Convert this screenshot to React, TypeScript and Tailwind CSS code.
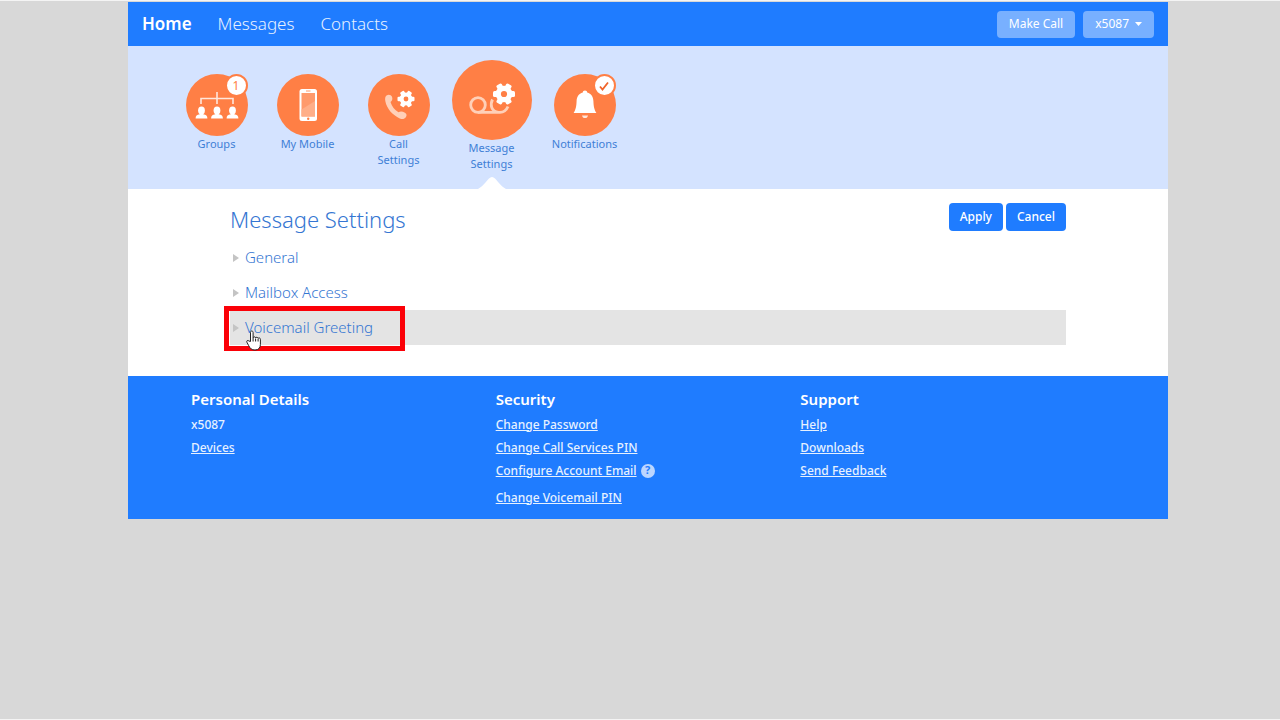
import * as React from "react";

import clsx from "clsx";

type FooterLink = { label: string; hint?: boolean };

const NAV_LINKS = ["Home", "Messages", "Contacts"];
const SECTIONS = ["General", "Mailbox Access", "Voicemail Greeting"];

const SECURITY_LINKS: FooterLink[] = [
  { label: "Change Password" },
  { label: "Change Call Services PIN" },
  { label: "Configure Account Email", hint: true },
  { label: "Change Voicemail PIN" },
];

const SUPPORT_LINKS: FooterLink[] = [{ label: "Help" }, { label: "Downloads" }, { label: "Send Feedback" }];

function Gear({ x, y, r }: { x: number; y: number; r: number }): React.JSX.Element {
  return (
    <g transform={`translate(${x} ${y}) scale(${r / 11})`}>
      {[30, 90, 150].map((angle) => (
        <rect key={angle} x="-3" y="-11" width="6" height="22" rx="1.5" fill="#fff" transform={`rotate(${angle})`} />
      ))}
      <circle r="5.6" fill="none" stroke="#fff" strokeWidth="5.500" />
      <circle r="3.1" fill="#ff7f45" />
    </g>
  );
}

function Person({ x }: { x: number }): React.JSX.Element {
  return (
    <g transform={`translate(${x} 0)`} fill="#fff">
      <ellipse cx="0" cy="36.5" rx="3.4" ry="4" />
      <path d="M-1.7 38.5h3.4v1.7c3 .5 4.200 1.500 4.200 4.300H-5.900c0-2.800 1.200-3.800 4.200-4.300z" />
    </g>
  );
}

function GroupsIcon(): React.JSX.Element {
  return (
    <svg viewBox="0 0 62 62" className="h-full w-full" aria-hidden="true">
      <path d="M31 18v12M15 30v-5.500h32V30" fill="none" stroke="#ffe6db" strokeWidth="1.600" />
      <Person x={15.5} />
      <Person x={31} />
      <Person x={46.5} />
    </svg>
  );
}

function MobileIcon(): React.JSX.Element {
  return (
    <svg viewBox="0 0 62 62" className="h-full w-full" aria-hidden="true">
      <rect x="22.5" y="15" width="17.5" height="32" rx="2.5" fill="#fff" />
      <rect x="24.5" y="19" width="13.5" height="23.5" fill="#ff9a6c" />
      <path d="M24.5 35.5 38 27v15.500H24.500z" fill="#ffae88" />
      <path d="M29 17h4.500" stroke="#ff9a6c" />
      <circle cx="31.2" cy="44.7" r="1.2" fill="#ff7f45" />
    </svg>
  );
}

function CallIcon(): React.JSX.Element {
  return (
    <svg viewBox="0 0 62 62" className="h-full w-full" aria-hidden="true">
      <path
        d="M18.500 21.500c2-1.600 4.700-.8 5.500 1.200.8 2.200.3 4-1.500 5.200 1.500 4.600 4 7.800 8 10.300 1.800-1.200 4-1 6.500.5 1.800 1.100 2 3 .8 4.500-1.300 1.900-3.600 2.200-6 1.200C24.500 41 18.800 35 17.300 27c-.4-2.300-.2-4.300 1.200-5.500z"
        fill="#ffd0b8"
      />
      <Gear x={38} y={25} r={8.5} />
    </svg>
  );
}

function VoicemailIcon(): React.JSX.Element {
  return (
    <svg viewBox="0 0 80 80" className="h-full w-full" aria-hidden="true">
      <circle cx="26" cy="45" r="7.3" fill="none" stroke="#ffd0b8" strokeWidth="2.8" />
      <path
        d="M26 52.300h22c4 0 6.500-2.300 8-5.800M40.500 39.500c-2.500 5-1.500 12 6 12.800"
        fill="none"
        stroke="#ffd0b8"
        strokeWidth="2.8"
      />
      <Gear x={52} y={34} r={11} />
    </svg>
  );
}

function BellIcon(): React.JSX.Element {
  return (
    <svg viewBox="0 0 62 62" className="h-full w-full" aria-hidden="true">
      <path
        d="M31 16.500c1.400 0 2.200.8 2.200 2 4 1 6 4.200 6.200 8.500.2 5.500.8 8.500 3 12H19.600c2.200-3.500 2.800-6.500 3-12 .2-4.300 2.200-7.500 6.200-8.500 0-1.200.8-2 2.200-2z"
        fill="#fff"
      />
      <path d="M28 41.500h6c-.3 1.700-1.400 2.600-3 2.600s-2.700-.9-3-2.600z" fill="#ffe6db" />
    </svg>
  );
}

function PointerIcon(): React.JSX.Element {
  return (
    <svg viewBox="0 0 16 21" className="h-[21px] w-4" aria-hidden="true">
      <path
        d="M4.500 11.500V2.500c0-2 2.600-2 2.600 0v5.300c.2-1.400 2.400-1.300 2.500.2.300-1.200 2.400-1 2.500.5.500-1 2.300-.7 2.300.8v5c0 3.400-1.600 5.700-5.400 5.700-3.500 0-4.800-1.600-6.300-4.300L.9 12.200c-.7-1.500 1-2.400 2-1.200z"
        fill="#fff"
        stroke="#222"
        strokeWidth="1"
      />
      <path d="M7.100 8v3.500M9.600 8.500v3M12.100 9v2.500" stroke="#222" strokeWidth="1" />
    </svg>
  );
}

type TileProps = {
  label: string;
  icon: React.ReactNode;
  badge?: React.ReactNode;
  active?: boolean;
};

function Tile({ label, icon, badge, active }: TileProps): React.JSX.Element {
  return (
    <a href="#" className={clsx("relative flex flex-col items-center", active ? "w-[95px]" : "w-[91px] pt-[14px]")}>
      <span className={clsx("relative block rounded-full bg-[#ff7f45]", active ? "size-20" : "size-[62px]")}>
        {icon}
        {badge && (
          <span className="absolute top-0 right-0 flex size-[23px] items-center justify-center rounded-full border-2 border-[#ff7f45] bg-white text-xs text-[#ff7f45]">
            {badge}
          </span>
        )}
      </span>
      <span className="text-center text-[11px] leading-4 whitespace-pre-line text-[#3f7fd6]">{label}</span>
      {active && (
        <svg viewBox="0 0 28 12" className="absolute bottom-0 h-3 w-7" aria-hidden="true">
          <path d="M0 12C4 10 8 5 11 1.500c2-2 4-2 6 0C20 5 24 10 28 12z" fill="#fff" />
        </svg>
      )}
    </a>
  );
}

function FooterLinks({ links }: { links: FooterLink[] }): React.JSX.Element {
  return (
    <ul>
      {links.map(({ label, hint }) => (
        <li key={label} className={clsx("flex h-[23px] items-center gap-1", hint && "mb-1")}>
          <a href="#" className="underline">
            {label}
          </a>
          {hint && (
            <button
              type="button"
              aria-label="About account email"
              className="flex size-[14px] items-center justify-center rounded-full bg-[#bcd6ff] text-[11px] font-bold text-[#1f7cff]"
            >
              ?
            </button>
          )}
        </li>
      ))}
    </ul>
  );
}

export default function App(): React.JSX.Element {
  return (
    <div className="min-h-screen border-y border-[#f4f4f4] bg-[#d8d8d8] pt-px pr-28 pl-32 font-['Noto_Sans',sans-serif]">
      <header className="flex h-11 items-center justify-between bg-[#1f7cff] px-[14px]">
        <nav className="flex gap-[26px] text-[17px]">
          {NAV_LINKS.map((label) => (
            <a key={label} href="#" className={label === "Home" ? "font-semibold text-white" : "font-light text-[#e6f1ff]"}>
              {label}
            </a>
          ))}
        </nav>
        <div className="flex gap-2 text-xs text-white">
          <button type="button" className="h-[27px] rounded-sm bg-[#78b0ff] px-3">
            Make Call
          </button>
          <button type="button" className="flex h-[27px] items-center gap-1.5 rounded-sm bg-[#78b0ff] px-3">
            x5087
            <svg viewBox="0 0 7 4" className="h-1 w-[7px]" aria-hidden="true">
              <path d="M0 0h7L3.500 4z" fill="#fff" />
            </svg>
          </button>
        </div>
      </header>

      <nav className="flex h-[143px] bg-[#d4e3ff] pt-[14px] pl-[43px]">
        <Tile label="Groups" icon={<GroupsIcon />} badge="1" />
        <Tile label="My Mobile" icon={<MobileIcon />} />
        <Tile label={"Call\nSettings"} icon={<CallIcon />} />
        <Tile label={"Message\nSettings"} icon={<VoicemailIcon />} active />
        <Tile
          label="Notifications"
          icon={<BellIcon />}
          badge={
            <svg viewBox="0 0 12 12" className="size-3" aria-hidden="true">
              <path d="M2 6.500 4.500 9.500 10 2.500" fill="none" stroke="#f0642a" strokeWidth="1.800" />
            </svg>
          }
        />
      </nav>

      <main className="bg-white px-[102px] pt-[14px] pb-[31px] text-[#3576d2]">
        <div className="flex h-[37px] items-start justify-between">
          <h1 className="text-[22px] leading-8 font-light">Message Settings</h1>
          <div className="flex gap-[3px] text-xs font-medium text-white">
            <button type="button" className="h-7 rounded-sm bg-[#1f7cff] px-[11px]">
              Apply
            </button>
            <button type="button" className="h-7 rounded-sm bg-[#1f7cff] px-[11px]">
              Cancel
            </button>
          </div>
        </div>
        <ul>
          {SECTIONS.map((label) => {
            const hovered = label === "Voicemail Greeting";
            return (
              <li key={label} className={clsx("relative", hovered && "bg-[#e4e4e4]")}>
                <button type="button" className="flex h-[35px] w-full items-center gap-1.5 pl-[3px] text-[15px]">
                  <svg viewBox="0 0 6 8" className="h-2 w-1.5" aria-hidden="true">
                    <path d="M0 0l6 4-6 4z" fill="#c4c4c4" />
                  </svg>
                  <span className="font-light">{label}</span>
                </button>
                {hovered && (
                  <>
                    <span className="pointer-events-none absolute -top-1 -left-1.5 h-[45px] w-[181px] border-[5px] border-[#fb0007]" />
                    <span className="pointer-events-none absolute top-5 left-4">
                      <PointerIcon />
                    </span>
                  </>
                )}
              </li>
            );
          })}
        </ul>
      </main>

      <footer className="grid grid-cols-3 bg-[#1f7cff] px-[63px] pt-3 pb-[10px] text-xs font-medium text-[#e6f1ff]">
        <section>
          <h2 className="mb-[3px] text-[15px] leading-[22px] font-semibold text-white">Personal Details</h2>
          <p className="flex h-[23px] items-center">x5087</p>
          <FooterLinks links={[{ label: "Devices" }]} />
        </section>
        <section>
          <h2 className="mb-[3px] text-[15px] leading-[22px] font-semibold text-white">Security</h2>
          <FooterLinks links={SECURITY_LINKS} />
        </section>
        <section>
          <h2 className="mb-[3px] text-[15px] leading-[22px] font-semibold text-white">Support</h2>
          <FooterLinks links={SUPPORT_LINKS} />
        </section>
      </footer>
    </div>
  );
}
